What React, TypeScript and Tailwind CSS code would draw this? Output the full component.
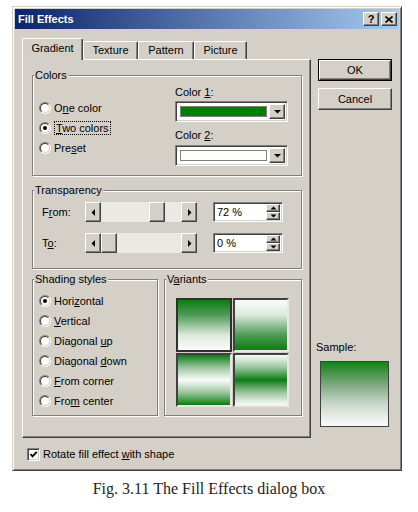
import type { ReactNode } from "react";

const raised =
  "border border-t-white border-l-white border-r-[#404040] border-b-[#404040] bg-[#d4d0c8] shadow-[inset_-1px_-1px_0_#808080]";
const sunken =
  "border border-t-[#808080] border-l-[#808080] border-r-white border-b-white shadow-[inset_1px_1px_0_#404040,inset_-1px_-1px_0_#d4d0c8]";

function U({ children }: { children: ReactNode }) {
  return <span className="underline underline-offset-[1px]">{children}</span>;
}

function Radio({ checked = false }: { checked?: boolean }) {
  return (
    <span className="flex h-[12px] w-[12px] shrink-0 items-center justify-center rounded-full border border-t-[#808080] border-l-[#808080] border-r-white border-b-white">
      <span className="flex h-[10px] w-[10px] items-center justify-center rounded-full border border-t-[#404040] border-l-[#404040] border-r-[#d4d0c8] border-b-[#d4d0c8] bg-white">
        {checked ? <span className="h-[4px] w-[4px] rounded-full bg-black" /> : null}
      </span>
    </span>
  );
}

function RadioRow({ checked, children }: { checked?: boolean; children: ReactNode }) {
  return (
    <div className="flex h-[20px] items-center gap-[3px]">
      <Radio checked={checked} />
      <span>{children}</span>
    </div>
  );
}

function Group({ title, className = "", children }: { title: ReactNode; className?: string; children: ReactNode }) {
  return (
    <fieldset
      className={`border border-[#808080] shadow-[1px_1px_0_#fff,inset_1px_1px_0_#fff] ${className}`}
    >
      <legend className="ml-[1px] bg-[#d4d0c8] px-[1px] leading-[13px]">{title}</legend>
      {children}
    </fieldset>
  );
}

function Arrow({ dir }: { dir: "left" | "right" | "up" | "down" }) {
  const pts = {
    left: "6,1 6,8 2.5,4.5",
    right: "3,1 3,8 6.5,4.5",
    up: "1,6 8,6 4.5,2.5",
    down: "1,3 8,3 4.5,6.5",
  }[dir];
  return (
    <svg width="9" height="9" viewBox="0 0 9 9">
      <polygon points={pts} fill="#000" />
    </svg>
  );
}

function SmallArrow({ dir }: { dir: "up" | "down" }) {
  return (
    <svg width="7" height="4" viewBox="0 0 7 4">
      <polygon points={dir === "up" ? "0.5,3.5 6.5,3.5 3.5,0.5" : "0.5,0.5 6.5,0.5 3.5,3.5"} fill="#000" />
    </svg>
  );
}

function ScrollBar({ pos }: { pos: number }) {
  return (
    <div className="flex h-[20px] w-[112px]">
      <div className={`flex h-[20px] w-[16px] items-center justify-center ${raised}`}>
        <Arrow dir="left" />
      </div>
      <div className="flex h-[20px] flex-1 bg-[#ebe9e4]">
        <div style={{ width: pos }} />
        <div className={`h-[20px] w-[16px] ${raised}`} />
      </div>
      <div className={`flex h-[20px] w-[16px] items-center justify-center ${raised}`}>
        <Arrow dir="right" />
      </div>
    </div>
  );
}

function Spin({ value }: { value: string }) {
  return (
    <div className={`flex h-[20px] w-[70px] items-center bg-white p-[2px] ${sunken}`}>
      <span className="flex-1 pl-[1px]">{value}</span>
      <div className="flex h-[16px] w-[14px] flex-col">
        <div className={`flex h-[8px] items-center justify-center ${raised}`}>
          <SmallArrow dir="up" />
        </div>
        <div className={`flex h-[8px] items-center justify-center ${raised}`}>
          <SmallArrow dir="down" />
        </div>
      </div>
    </div>
  );
}

function ColorPick({ color }: { color: string }) {
  return (
    <div className={`flex h-[21px] w-[113px] bg-white p-[2px] ${sunken}`}>
      <div className="m-[2px] flex-1 border border-[#808080]" style={{ background: color }} />
      <div className={`flex w-[16px] items-center justify-center ${raised}`}>
        <Arrow dir="down" />
      </div>
    </div>
  );
}

function Tab({ selected = false, width, children }: { selected?: boolean; width: number; children: ReactNode }) {
  if (selected) {
    return (
      <div
        className="relative z-10 -mb-px flex h-[22px] items-center justify-center rounded-t-[2px] border-t border-l border-r border-t-white border-l-white border-r-[#404040] bg-[#d4d0c8] pb-[2px] shadow-[inset_-1px_0_0_#808080]"
        style={{ width }}
      >
        {children}
      </div>
    );
  }
  return (
    <div
      className="flex h-[18px] items-center justify-center rounded-t-[2px] border-t border-l border-r border-t-white border-l-white border-r-[#404040] bg-[#d4d0c8] shadow-[inset_-1px_0_0_#808080]"
      style={{ width }}
    >
      {children}
    </div>
  );
}

function Tile({ bg, selected = false }: { bg: string; selected?: boolean }) {
  return (
    <div
      className={
        selected
          ? "h-[54px] w-[56px] border-2 border-[#303030]"
          : "h-[54px] w-[56px] border-2 border-t-[#404040] border-l-[#404040] border-r-[#e8e8e8] border-b-[#e8e8e8]"
      }
      style={{ background: bg }}
    />
  );
}

export default function App() {
  return (
    <div className="min-h-[512px] bg-white pt-[6px] font-['Liberation_Sans',Arial,sans-serif] text-[11px] leading-[13px] text-black">
      <div className="ml-[12px] flex h-[465px] w-[390px] flex-col border border-t-[#d4d0c8] border-l-[#d4d0c8] border-r-[#404040] border-b-[#404040] bg-[#d4d0c8] p-[2px] shadow-[inset_1px_1px_0_#fff,inset_-1px_-1px_0_#808080]">
        {/* title bar */}
        <div className="flex h-[20px] items-center justify-between bg-[linear-gradient(to_right,#0a246a,#a6caf0)] pl-[3px] pr-[2px]">
          <span className="font-bold text-white">Fill Effects</span>
          <div className="flex gap-[2px]">
            <div className={`flex h-[14px] w-[16px] items-center justify-center text-[11px] font-bold leading-none ${raised}`}>
              ?
            </div>
            <div className={`flex h-[14px] w-[16px] items-center justify-center ${raised}`}>
              <svg width="8" height="7" viewBox="0 0 8 7">
                <path d="M0.5 0.5 L7.5 6.5 M7.5 0.5 L0.5 6.5" stroke="#000" strokeWidth="1.6" />
              </svg>
            </div>
          </div>
        </div>

        <div className="flex flex-col px-[7px] pt-[9px]">
          <div className="flex">
            {/* tabs and page */}
            <div className="flex w-[289px] flex-col">
              <div className="flex h-[21px] items-end">
                <Tab selected width={61}>Gradient</Tab>
                <Tab width={55}>Texture</Tab>
                <Tab width={56}>Pattern</Tab>
                <Tab width={53}>Picture</Tab>
              </div>
              <div className="h-[379px] border border-t-white border-l-white border-r-[#404040] border-b-[#404040] pl-[9px] pt-[9px] shadow-[inset_-1px_-1px_0_#808080]">
                <Group title="Colors" className="w-[270px]">
                  <div className="flex h-[93px] pl-[6px]">
                    <div className="w-[136px] pt-[16px]">
                      <RadioRow>
                        O<U>n</U>e color
                      </RadioRow>
                      <RadioRow checked>
                        <span className="border border-dotted border-black px-[1px]">
                          <U>T</U>wo colors
                        </span>
                      </RadioRow>
                      <RadioRow>
                        Pre<U>s</U>et
                      </RadioRow>
                    </div>
                    <div className="flex flex-col pt-[4px]">
                      <span>
                        Color <U>1</U>:
                      </span>
                      <div className="mt-[2px]">
                        <ColorPick color="#008000" />
                      </div>
                      <span className="mt-[7px]">
                        Color <U>2</U>:
                      </span>
                      <div className="mt-[3px]">
                        <ColorPick color="#fbfefb" />
                      </div>
                    </div>
                  </div>
                </Group>

                <Group title="Transparency" className="mt-[8px] w-[270px]">
                  <div className="flex h-[71px] flex-col gap-[11px] pl-[9px] pt-[5px]">
                    <div className="flex items-center">
                      <span className="w-[43px]">
                        F<U>r</U>om:
                      </span>
                      <ScrollBar pos={48} />
                      <div className="ml-[16px]">
                        <Spin value="72 %" />
                      </div>
                    </div>
                    <div className="flex items-center">
                      <span className="w-[43px]">
                        T<U>o</U>:
                      </span>
                      <ScrollBar pos={0} />
                      <div className="ml-[16px]">
                        <Spin value="0 %" />
                      </div>
                    </div>
                  </div>
                </Group>

                <div className="mt-[4px] flex w-[270px] gap-[6px]">
                  <Group title="Shading styles" className="w-[126px]">
                    <div className="h-[129px] pl-[6px] pt-[5px]">
                      <RadioRow checked>
                        Hori<U>z</U>ontal
                      </RadioRow>
                      <RadioRow>
                        <U>V</U>ertical
                      </RadioRow>
                      <RadioRow>
                        Diagonal <U>u</U>p
                      </RadioRow>
                      <RadioRow>
                        Diagonal <U>d</U>own
                      </RadioRow>
                      <RadioRow>
                        <U>F</U>rom corner
                      </RadioRow>
                      <RadioRow>
                        Fro<U>m</U> center
                      </RadioRow>
                    </div>
                  </Group>
                  <Group
                    title={
                      <>
                        V<U>a</U>riants
                      </>
                    }
                    className="w-[138px]"
                  >
                    <div className="h-[129px] pl-[11px] pt-[12px]">
                      <div className="grid w-[113px] grid-cols-[56px_56px] gap-[1px]">
                        <Tile selected bg="linear-gradient(to bottom,#0b7d12 0%,#4f9b54 30%,#dce9dc 70%,#fafcfa 100%)" />
                        <Tile bg="linear-gradient(to bottom,#fafcfa 0%,#dce9dc 30%,#4f9b54 70%,#0b7d12 100%)" />
                        <Tile bg="linear-gradient(to bottom,#0b7d12 0%,#9cc59f 25%,#fafcfa 50%,#9cc59f 75%,#0b7d12 100%)" />
                        <Tile bg="linear-gradient(to bottom,#fafcfa 0%,#9cc59f 25%,#0b7d12 50%,#9cc59f 75%,#fafcfa 100%)" />
                      </div>
                    </div>
                  </Group>
                </div>
              </div>
            </div>

            {/* buttons and sample */}
            <div className="ml-[7px] flex w-[74px] flex-col pt-[21px]">
              <div className="border border-black">
                <div className={`flex h-[20px] items-center justify-center ${raised}`}>OK</div>
              </div>
              <div className={`mt-[7px] flex h-[22px] items-center justify-center ${raised}`}>Cancel</div>
              <div className="mt-auto flex flex-col pb-[11px]">
                <span className="-ml-[2px]">Sample:</span>
                <div className="ml-[2px] mt-[7px] h-[66px] w-[69px] border border-[#404040] bg-[linear-gradient(to_bottom,#148216_0%,#7aa87c_35%,#c9d6c9_65%,#fbfdfb_100%)]" />
              </div>
            </div>
          </div>

          {/* rotate checkbox */}
          <div className="ml-[5px] mt-[10px] flex items-center gap-[3px]">
            <div className={`flex h-[13px] w-[13px] items-center justify-center bg-white ${sunken}`}>
              <svg width="9" height="9" viewBox="0 0 9 9">
                <polyline points="1.5,4 3.5,6.3 7.8,1.8" fill="none" stroke="#000" strokeWidth="1.8" />
              </svg>
            </div>
            <span>
              Rotate fill effect <U>w</U>ith shape
            </span>
          </div>
        </div>
      </div>

      <p className="mt-[9px] text-center font-['Liberation_Serif','Times_New_Roman',serif] text-[16px] leading-[18px] text-[#1e1e1e]">
        Fig. 3.11 The Fill Effects dialog box
      </p>
    </div>
  );
}
